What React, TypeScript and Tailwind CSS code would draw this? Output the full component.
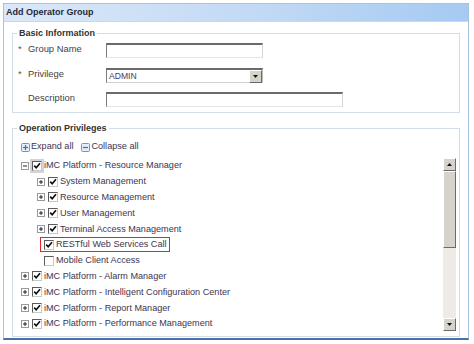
import React from "react";

const font = { fontFamily: '"Liberation Sans", Arial, sans-serif' };

function Check({ checked = true }: { checked?: boolean }) {
  return (
    <span className="inline-flex h-[10px] w-[10px] shrink-0 border-t border-l border-t-[#5a5a5a] border-l-[#5a5a5a] border-r border-b border-r-[#c8c8c8] border-b-[#c8c8c8] bg-white">
      {checked && (
        <svg viewBox="0 0 8 8" width="8" height="8">
          <path d="M1.2 3.6 L3.2 5.8 L7 1.3" fill="none" stroke="#111" strokeWidth="1.7" />
        </svg>
      )}
    </span>
  );
}

function Expander({ minus = false }: { minus?: boolean }) {
  return (
    <svg viewBox="0 0 8 8" width="8" height="8" className="shrink-0">
      <rect x="0.5" y="0.5" width="7" height="7" fill="#fff" stroke="#9a9a9a" />
      <path d="M2 4 H6" stroke="#222" strokeWidth="1" />
      {!minus && <path d="M4 2 V6" stroke="#222" strokeWidth="1" />}
    </svg>
  );
}

function BlueIcon({ minus = false }: { minus?: boolean }) {
  return (
    <svg viewBox="0 0 9 9" width="9" height="9" className="shrink-0">
      <rect x="0.5" y="0.5" width="8" height="8" rx="1" fill="#e4eefa" stroke="#6f97cc" />
      <path d="M2 4.5 H7" stroke="#3d6fb3" strokeWidth="1.2" />
      {!minus && <path d="M4.5 2 V7" stroke="#3d6fb3" strokeWidth="1.2" />}
    </svg>
  );
}

function Arrow({ up }: { up: boolean }) {
  return (
    <div className="flex h-[13px] w-[13px] items-center justify-center bg-[#d6d3cc] border-t border-l border-t-white border-l-white border-r border-b border-r-[#6b6b6b] border-b-[#6b6b6b]">
      <svg viewBox="0 0 5 3" width="5" height="3">
        <path d={up ? "M0 3 L2.5 0 L5 3 Z" : "M0 0 L2.5 3 L5 0 Z"} fill="#111" />
      </svg>
    </div>
  );
}

const inputCls =
  "h-[15px] bg-white border-t-2 border-t-[#6a6a6a] border-l border-l-[#7c7c7c] border-r border-r-[#d4d4d4] border-b border-b-[#e4e4e4]";

const treeText = "text-[9.1px] leading-none text-[#3d3550] whitespace-nowrap";

function TopRow({ label, minus = false, highlight = false }: { label: string; minus?: boolean; highlight?: boolean }) {
  return (
    <div className="flex h-[15.8px] items-center pl-[4px]">
      <Expander minus={minus} />
      <span className="ml-[3px] flex">
        {highlight ? (
          <span className="-m-[2px] flex bg-[#d4d4d4] p-[2px]">
            <Check />
          </span>
        ) : (
          <Check />
        )}
      </span>
      <span className={`ml-[2px] ${treeText}`}>{label}</span>
    </div>
  );
}

function ChildRow({ label }: { label: string }) {
  return (
    <div className="flex h-[15.8px] items-center pl-[20px]">
      <Expander />
      <span className="ml-[3px] flex">
        <Check />
      </span>
      <span className={`ml-[2px] ${treeText}`}>{label}</span>
    </div>
  );
}

export default function App() {
  return (
    <div className="h-[344px] w-[474px] bg-white" style={font}>
      <div className="ml-[3px] pt-[3px]">
        <div className="flex h-[337px] w-[466px] flex-col border border-[#a9c1e0] border-b-2 border-b-[#4b70a6] bg-white">
          <div className="flex h-[18px] items-center bg-gradient-to-r from-[#dbe8f8] via-[#c4dbf5] to-[#a6caf2] pl-[2px] border-b border-b-[#c6d8ee]">
            <span className="text-[9px] font-bold leading-none text-[#1e2a3a]">Add Operator Group</span>
          </div>
          <div className="flex flex-col px-[8px]">
            <fieldset className="mt-[6px] border border-[#d3dde9] pl-[4px] pb-[5px]">
              <legend className="px-[2px] text-[9px] font-bold leading-[11px] text-[#333]">Basic Information</legend>
              <div className="mt-[4px] flex items-start pl-[1px]">
                <span className="w-[10px] text-[9.4px] leading-[11px] text-[#555]">*</span>
                <span className="w-[78px] text-[9.4px] leading-[11px] text-[#3f3f3f]">Group Name</span>
                <div className={`${inputCls} w-[157px]`} />
              </div>
              <div className="mt-[10px] flex items-start pl-[1px]">
                <span className="w-[10px] text-[9.4px] leading-[11px] text-[#555]">*</span>
                <span className="w-[78px] text-[9.4px] leading-[11px] text-[#3f3f3f]">Privilege</span>
                <div className="flex h-[15px] w-[157px] items-center bg-white border-t-2 border-t-[#6a6a6a] border-l border-l-[#7c7c7c] border-r border-r-[#bdbdbd] border-b border-b-[#d0d0d0]">
                  <span className="flex-1 pl-[2px] text-[8.6px] leading-none text-[#4a3a62]">ADMIN</span>
                  <Arrow up={false} />
                </div>
              </div>
              <div className="mt-[9px] flex items-start pl-[1px]">
                <span className="w-[10px]" />
                <span className="w-[78px] text-[9.4px] leading-[11px] text-[#3f3f3f]">Description</span>
                <div className={`${inputCls} w-[237px]`} />
              </div>
            </fieldset>
            <fieldset className="mt-[10px] border border-[#d3dde9] pl-[4px] pb-[4px]">
              <legend className="px-[2px] text-[9px] font-bold leading-[11px] text-[#333]">Operation Privileges</legend>
              <div className="mt-[6px] flex h-[14px] items-center pl-[4px]">
                <BlueIcon />
                <span className="ml-[1px] text-[9.1px] leading-none text-[#3d3550]">Expand all</span>
                <span className="ml-[8px] flex">
                  <BlueIcon minus />
                </span>
                <span className="ml-[1px] text-[9.1px] leading-none text-[#3d3550]">Collapse all</span>
              </div>
              <div className="mt-[4px] flex h-[174px] pr-[3px]">
                <div className="flex flex-1 flex-col">
                  <TopRow label="iMC Platform - Resource Manager" minus highlight />
                  <ChildRow label="System Management" />
                  <ChildRow label="Resource Management" />
                  <ChildRow label="User Management" />
                  <ChildRow label="Terminal Access Management" />
                  <div className="flex h-[15.8px] items-center pl-[23px]">
                    <span className="flex h-[15px] items-center border border-[#e3242b] pl-[3px] pr-[2px]">
                      <Check />
                      <span className={`ml-[2px] ${treeText}`}>RESTful Web Services Call</span>
                    </span>
                  </div>
                  <div className="flex h-[15.8px] items-center pl-[27px]">
                    <Check checked={false} />
                    <span className={`ml-[2px] ${treeText}`}>Mobile Client Access</span>
                  </div>
                  <TopRow label="iMC Platform - Alarm Manager" />
                  <TopRow label="iMC Platform - Intelligent Configuration Center" />
                  <TopRow label="iMC Platform - Report Manager" />
                  <TopRow label="iMC Platform - Performance Management" />
                </div>
                <div className="flex h-[173px] w-[13px] flex-col bg-[#eeebe6]">
                  <Arrow up />
                  <div className="h-[77px] w-[13px] bg-[#d6d3cc] border-t border-l border-t-white border-l-white border-r border-b border-r-[#6b6b6b] border-b-[#6b6b6b]" />
                  <div className="flex-1" />
                  <Arrow up={false} />
                </div>
              </div>
            </fieldset>
          </div>
        </div>
      </div>
    </div>
  );
}
